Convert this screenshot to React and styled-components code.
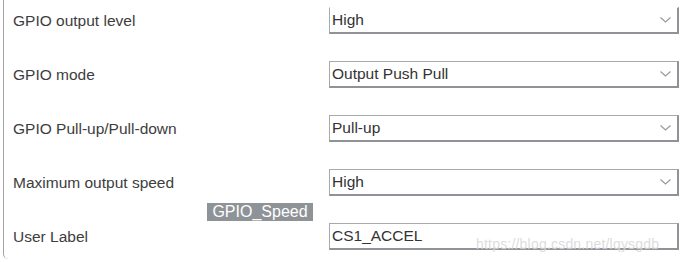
import React from 'react'
import styled, { createGlobalStyle } from 'styled-components'

const GlobalStyle = createGlobalStyle`
  html, body {
    margin: 0;
    padding: 0;
    background: #ffffff;
  }
  body {
    font-family: "Liberation Sans", Arial, sans-serif;
    color: #333;
  }
`

const rows = [
  { label: 'GPIO output level', value: 'High', kind: 'select' },
  { label: 'GPIO mode', value: 'Output Push Pull', kind: 'select' },
  { label: 'GPIO Pull-up/Pull-down', value: 'Pull-up', kind: 'select' },
  { label: 'Maximum output speed', value: 'High', kind: 'select' },
  { label: 'User Label', value: 'CS1_ACCEL', kind: 'input' },
]

const Chevron = () => (
  <svg width="11" height="6" viewBox="0 0 11 6" fill="none">
    <path d="M0.5 0.5 L5.5 5 L10.5 0.5" stroke="#9a9a9a" strokeWidth="1.2" />
  </svg>
)

const App = () => {
  return (
    <>
      <GlobalStyle />
      <Panel>
        {rows.map((row, i) => (
          <Row key={i}>
            <Label>{row.label}</Label>
            <Field first={i === 0}>
              <Value>{row.value}</Value>
              {row.kind === 'select' && <Chevron />}
            </Field>
          </Row>
        ))}
        <Tooltip>GPIO_Speed</Tooltip>
        <Watermark>https://blog.csdn.net/lqysgdb</Watermark>
      </Panel>
    </>
  )
}

export default App

const Panel = styled.div`
  position: relative;
  margin-left: 3px;
  height: 259px;
  box-sizing: border-box;
  padding: 7px 0 9px 9px;
  border-left: 1px solid #a3a3a3;
  border-bottom-left-radius: 5px;
  display: flex;
  flex-direction: column;
  gap: 27px;
`

const Row = styled.div`
  display: flex;
  align-items: flex-start;
  height: 27px;
`

const Label = styled.div`
  width: 316px;
  font-size: 15.5px;
  line-height: 27px;
  color: #3d3d3d;
  white-space: nowrap;
`

const Field = styled.div`
  width: 350px;
  height: 27px;
  box-sizing: border-box;
  display: flex;
  align-items: center;
  justify-content: space-between;
  padding: 0 6px 0 2px;
  border-top: 1px solid ${p => (p.first ? 'transparent' : '#a6a9ad')};
  border-left: 1px solid #a6a9ad;
  border-right: 2px solid #8f9398;
  border-bottom: 2px solid #8f9398;
  background: #fff;
`

const Value = styled.span`
  font-size: 15.5px;
  color: #333;
`

const Tooltip = styled.div`
  position: absolute;
  left: 203px;
  top: 203px;
  width: 106px;
  height: 18px;
  box-sizing: border-box;
  background: #8e9398;
  color: #fff;
  font-size: 16px;
  line-height: 18px;
  text-align: center;
`

const Watermark = styled.div`
  position: absolute;
  left: 472px;
  top: 236px;
  font-size: 14px;
  color: rgba(190, 190, 190, 0.55);
  text-shadow: 0 0 1px rgba(255, 255, 255, 0.8);
  letter-spacing: 0.2px;
  pointer-events: none;
`
